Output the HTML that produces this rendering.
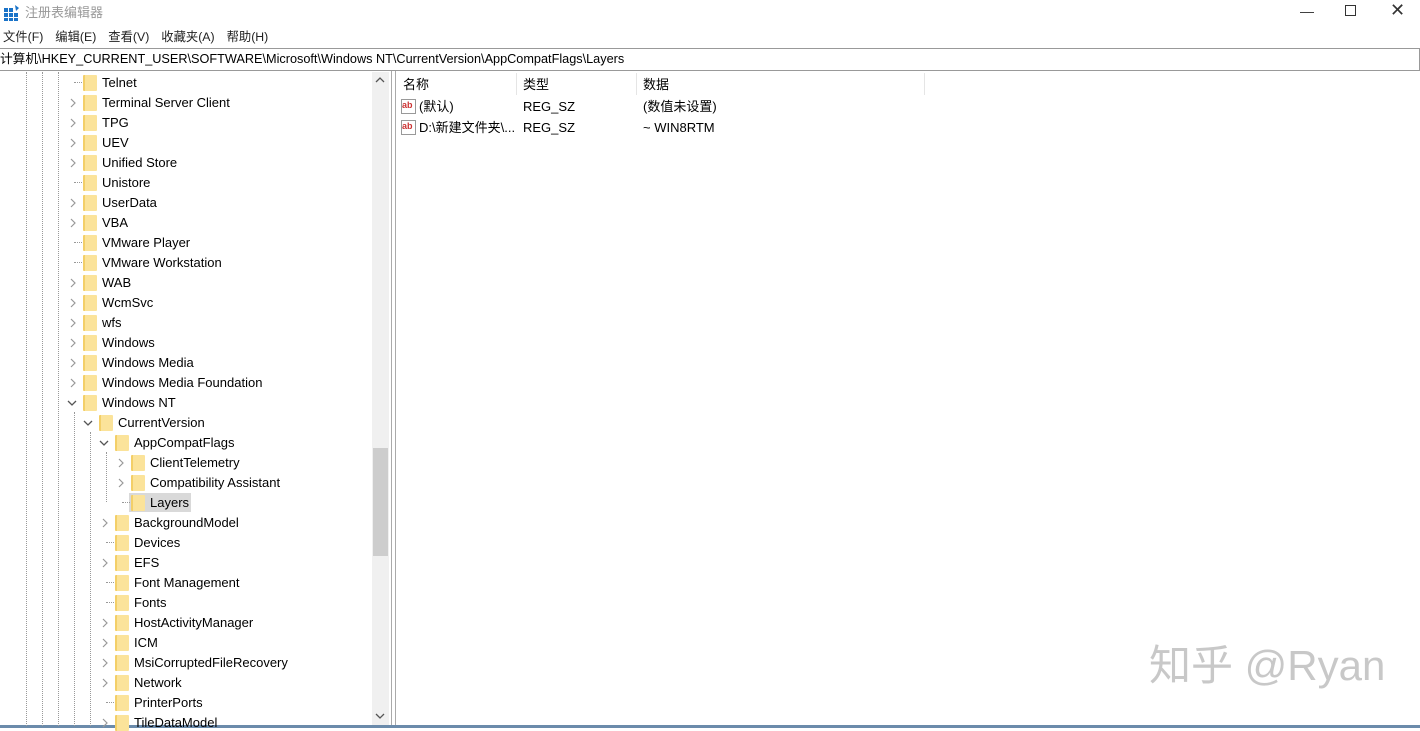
<!DOCTYPE html>
<html><head><meta charset="utf-8"><style>
*{margin:0;padding:0;box-sizing:border-box}
body{width:1420px;height:728px;overflow:hidden;background:#fff;font-family:"Liberation Sans","Noto Sans CJK SC",sans-serif;font-size:13px;line-height:15px;color:#000;position:relative}
.a{position:absolute;white-space:nowrap}
.f{position:absolute;width:14px;height:16px;background:#fbe39a;border-left:2px solid #f3cf68;border-radius:1px}
.ch{position:absolute}
.dv{position:absolute;border-left:1px dotted #999;width:0}
.dh{position:absolute;border-top:1px dotted #999;height:0;width:8px}
</style></head><body>
<svg class="a" style="left:4px;top:5px" width="16" height="16"><rect x="0" y="3" width="4" height="4" fill="#1a73c8"/><rect x="5" y="3" width="4" height="4" fill="#1a73c8"/><rect x="0" y="8" width="4" height="4" fill="#1a73c8"/><rect x="5" y="8" width="4" height="4" fill="#1a73c8"/><rect x="10" y="8" width="4" height="4" fill="#1a73c8"/><rect x="0" y="13" width="4" height="3" fill="#1a73c8"/><rect x="5" y="13" width="4" height="3" fill="#1a73c8"/><rect x="10" y="13" width="4" height="3" fill="#1a73c8"/><path d="M11 0 L15 3 L12 6 Z" fill="#1a73c8"/></svg>
<div class="a" style="left:25px;top:5px;color:#999;font-size:13px">注册表编辑器</div>
<div class="a" style="left:1300px;top:4px;font-size:14px;color:#333">—</div>
<div class="a" style="left:1345px;top:5px;width:11px;height:11px;border:1px solid #333"></div>
<div class="a" style="left:1390px;top:3px;font-size:18px;color:#333">✕</div>
<div class="a" style="left:3px;top:30px;color:#222;font-size:12.3px">文件(F)<span style="margin-left:12px">编辑(E)</span><span style="margin-left:12px">查看(V)</span><span style="margin-left:12px">收藏夹(A)</span><span style="margin-left:12px">帮助(H)</span></div>
<div class="a" style="left:-2px;top:48px;width:1422px;height:23px;border:1px solid #999;border-left:none"></div>
<div class="a" style="left:0;top:52px;font-size:12.7px">计算机\HKEY_CURRENT_USER\SOFTWARE\Microsoft\Windows NT\CurrentVersion\AppCompatFlags\Layers</div>
<div class="a" style="left:0;top:71px;width:392px;height:655px;border-right:1px solid #aaa"></div>
<div class="a" style="left:395px;top:71px;width:1025px;height:655px;border-left:1px solid #aaa"></div>
<div class="a" style="left:372px;top:72px;width:17px;height:654px;background:#f0f0f0"></div>
<div class="a" style="left:373px;top:448px;width:15px;height:108px;background:#cdcdcd"></div>
<svg class="a" style="left:375px;top:76px" width="10" height="8"><polyline points="1,6 5,2 9,6" fill="none" stroke="#555" stroke-width="1.3"/></svg>
<svg class="a" style="left:375px;top:712px" width="10" height="8"><polyline points="1,2 5,6 9,2" fill="none" stroke="#555" stroke-width="1.3"/></svg>
<div class="a" style="left:0;top:725px;width:1420px;height:3px;background:#6b8bab"></div>
<div class="dv" style="left:26px;top:72px;height:654px"></div>
<div class="dv" style="left:42px;top:72px;height:654px"></div>
<div class="dv" style="left:58px;top:72px;height:654px"></div>
<div class="dv" style="left:74px;top:412px;height:314px"></div>
<div class="dv" style="left:90px;top:432px;height:294px"></div>
<div class="dv" style="left:106px;top:452px;height:50px"></div>
<div class="a" style="left:129px;top:493px;width:62px;height:19px;background:#d9d9d9"></div>
<div id="tree"></div>
<div class="a" style="left:403px;top:77px">名称</div>
<div class="a" style="left:523px;top:77px">类型</div>
<div class="a" style="left:643px;top:77px">数据</div>
<div class="a" style="left:516px;top:73px;height:22px;border-left:1px solid #e5e5e5"></div>
<div class="a" style="left:636px;top:73px;height:22px;border-left:1px solid #e5e5e5"></div>
<div class="a" style="left:924px;top:73px;height:22px;border-left:1px solid #e5e5e5"></div>
<div class="a" style="left:401px;top:99px;width:15px;height:15px;border:1px solid #999;font-size:9px;color:#c33;font-weight:bold;line-height:11px">ab</div>
<div class="a" style="left:401px;top:120px;width:15px;height:15px;border:1px solid #999;font-size:9px;color:#c33;font-weight:bold;line-height:11px">ab</div>
<div class="a" style="left:419px;top:99px">(默认)</div>
<div class="a" style="left:523px;top:99px">REG_SZ</div>
<div class="a" style="left:643px;top:99px">(数值未设置)</div>
<div class="a" style="left:419px;top:120px">D:\新建文件夹\...</div>
<div class="a" style="left:523px;top:120px">REG_SZ</div>
<div class="a" style="left:643px;top:120px">~ WIN8RTM</div>
<div class="a" style="left:1149px;top:642px;font-size:42px;line-height:48px;color:#c8c8c8">知乎 @Ryan</div>
<script>
var items=[["Telnet",0,0],["Terminal Server Client",0,1],["TPG",0,1],["UEV",0,1],["Unified Store",0,1],["Unistore",0,0],["UserData",0,1],["VBA",0,1],["VMware Player",0,0],["VMware Workstation",0,0],["WAB",0,1],["WcmSvc",0,1],["wfs",0,1],["Windows",0,1],["Windows Media",0,1],["Windows Media Foundation",0,1],["Windows NT",0,2],["CurrentVersion",1,2],["AppCompatFlags",2,2],["ClientTelemetry",3,1],["Compatibility Assistant",3,1],["Layers",3,0],["BackgroundModel",2,1],["Devices",2,0],["EFS",2,1],["Font Management",2,0],["Fonts",2,0],["HostActivityManager",2,1],["ICM",2,1],["MsiCorruptedFileRecovery",2,1],["Network",2,1],["PrinterPorts",2,0],["TileDataModel",2,1]];
var h="";items.forEach(function(it,i){var y=72+i*20,l=it[1]*16;
if(it[2]==1)h+='<svg class="ch" style="left:'+(69+l)+'px;top:'+(y+6)+'px" width="8" height="10"><polyline points="2,1 6,5 2,9" fill="none" stroke="#999" stroke-width="1.2"/></svg>';
else if(it[2]==2)h+='<svg class="ch" style="left:'+(67+l)+'px;top:'+(y+7)+'px" width="10" height="8"><polyline points="1,2 5,6 9,2" fill="none" stroke="#555" stroke-width="1.3"/></svg>';
else h+='<div class="dh" style="left:'+(74+l)+'px;top:'+(y+10)+'px"></div>';
h+='<div class="f" style="left:'+(83+l)+'px;top:'+(y+3)+'px"></div>';
h+='<div class="a" style="left:'+(102+l)+'px;top:'+(y+3)+'px">'+it[0]+'</div>';});
document.getElementById("tree").innerHTML=h;
</script>
</body></html>
